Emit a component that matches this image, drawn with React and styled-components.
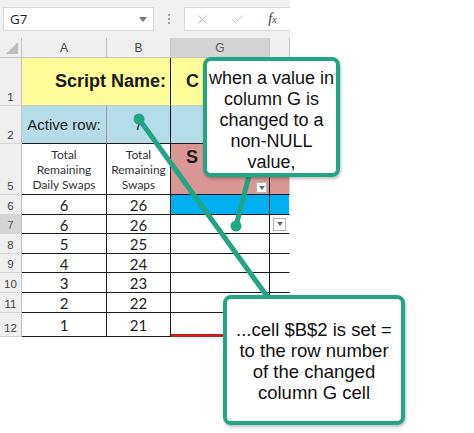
import React from 'react';
import styled, { createGlobalStyle } from 'styled-components';
import { X, Check } from 'lucide-react';

const GlobalStyle = createGlobalStyle`
  html, body { margin: 0; padding: 0; background: #fff; }
  body { width: 474px; height: 433px; overflow: hidden; font-family: "Liberation Sans", Arial, sans-serif; }
`;

const TEAL = '#21a585';
const GRID = '#d4d4d4';
const INK = '#1a1a1a';

const Page = styled.div`
  position: relative;
  width: 474px;
  height: 433px;
  background: #fff;
`;

const Excel = styled.div`
  width: 290px;
  display: flex;
  flex-direction: column;
`;

const Toolbar = styled.div`
  height: 38px;
  background: #f1f1f1;
  display: flex;
  align-items: center;
  padding-left: 3px;
  box-sizing: border-box;
`;

const NameBox = styled.div`
  width: 152px;
  height: 24px;
  background: #fff;
  border: 1px solid #d9d9d9;
  box-sizing: border-box;
  display: flex;
  align-items: center;
  justify-content: space-between;
  padding: 0 6px 0 6px;
  font-family: "Open Sans", sans-serif;
  font-size: 13.5px;
  color: #222;
`;

const Caret = styled.span`
  width: 0;
  height: 0;
  border-left: 4px solid transparent;
  border-right: 4px solid transparent;
  border-top: 5px solid #7a7a7a;
`;

const Sep = styled.div`
  width: 30px;
  display: flex;
  flex-direction: column;
  align-items: center;
  gap: 2px;
`;

const Dot = styled.span`
  width: 2px;
  height: 2px;
  background: #a8a8a8;
`;

const FormulaBox = styled.div`
  flex: 1;
  height: 24px;
  background: #fff;
  border: 1px solid #d9d9d9;
  border-right: none;
  box-sizing: border-box;
  display: grid;
  grid-template-columns: 35px 35px 35px;
  align-items: center;
  justify-items: center;
`;

const Fx = styled.span`
  font-family: "Liberation Serif", serif;
  font-style: italic;
  font-size: 14px;
  color: #333;
  sub { font-size: 10px; vertical-align: baseline; }
`;

const Grid = styled.div`
  display: grid;
  grid-template-columns: 22px 85px 64px 99px 20px;
  grid-template-rows: 20px 48px 38px 51px 20px 19px 20px 19px 20px 20px 24px;
`;

const Head = styled.div`
  box-sizing: border-box;
  background: ${p => (p.$sel ? '#d5d5d5' : '#efefef')};
  border-right: 1px solid #c4c4c4;
  border-bottom: 1px solid #c4c4c4;
  font-family: "Liberation Sans", Arial, sans-serif;
  font-size: 12px;
  color: ${p => (p.$sel ? '#5a5a5a' : '#444')};
  display: flex;
  justify-content: center;
  align-items: center;
`;

const Corner = styled(Head)`
  justify-content: flex-end;
  align-items: flex-end;
  padding: 0 3px 3px 0;
`;

const RowHead = styled(Head)`
  border-bottom-color: #d6d6d6;
  align-items: flex-end;
  padding-bottom: 2px;
  font-size: 11.5px;
`;

const Cell = styled.div`
  box-sizing: border-box;
  position: relative;
  grid-column: span ${p => p.$span || 1};
  background: ${p => p.$bg || '#fff'};
  border-right: 1px solid ${p => p.$r || GRID};
  border-bottom: ${p => p.$b || `1px solid ${GRID}`};
  display: flex;
  align-items: ${p => p.$v || 'center'};
  justify-content: ${p => p.$h || 'center'};
  color: ${INK};
`;

const Title = styled(Cell)`
  font-family: "Liberation Sans", Arial, sans-serif;
  font-weight: bold;
  font-size: 18px;
  padding-right: 4px;
  padding-left: ${p => p.$pl || 0}px;
`;

const Label = styled(Cell)`
  font-family: "Liberation Sans", Arial, sans-serif;
  font-size: 15px;
`;

const HeadText = styled(Cell)`
  font-family: Lato, "Open Sans", sans-serif;
  font-size: 12px;
  line-height: 15px;
  text-align: center;
  color: #333;
  padding-bottom: 2px;
`;

const Num = styled(Cell)`
  font-family: Lato, "Open Sans", sans-serif;
  font-size: 15px;
  color: #222;
  padding-top: 1px;
`;

const SmallBold = styled(Cell)`
  font-family: "Liberation Sans", Arial, sans-serif;
  font-weight: bold;
  font-size: 18px;
  padding: 3px 0 0 15px;
`;

const DropBtn = styled.span`
  box-sizing: border-box;
  width: ${p => p.$s || 11}px;
  height: ${p => p.$s || 11}px;
  background: #fff;
  border: 1px solid #b5b5b5;
  display: flex;
  align-items: center;
  justify-content: center;
  &::after {
    content: '';
    border-left: 3px solid transparent;
    border-right: 3px solid transparent;
    border-top: 4px solid #666;
  }
`;

const CornerDrop = styled(DropBtn)`
  position: absolute;
  right: 2px;
  bottom: 1px;
`;

const Overlay = styled.svg`
  position: absolute;
  left: 0;
  top: 0;
  width: 474px;
  height: 433px;
  pointer-events: none;
`;

const Callout = styled.div`
  position: absolute;
  left: ${p => p.$x}px;
  top: ${p => p.$y}px;
  width: ${p => p.$w}px;
  height: ${p => p.$h}px;
  box-sizing: border-box;
  border: 4px solid ${TEAL};
  border-radius: 8px;
  background: #fff;
  box-shadow: 1px 2px 3px rgba(0, 0, 0, 0.25);
  display: flex;
  align-items: center;
  justify-content: center;
  text-align: center;
  white-space: nowrap;
  padding-top: ${p => p.$pt || 0}px;
  font-family: "Liberation Sans", Arial, sans-serif;
  font-size: ${p => p.$fs || 18}px;
  line-height: 21px;
  color: #111;
`;

const BLACK = '#1a1a1a';
const B1 = `1px solid ${BLACK}`;

const YEL = '#fdfd9a';
const LBLUE = '#b5dde7';
const PINK = '#d99694';
const CYAN = '#00b0f0';

const data = [
  [6, 26],
  [6, 26],
  [5, 25],
  [4, 24],
  [3, 23],
  [2, 22],
  [1, 21],
];

export default function App() {
  return (
    <Page>
      <GlobalStyle />
      <Excel>
        <Toolbar>
          <NameBox>
            <span>G7</span>
            <Caret />
          </NameBox>
          <Sep>
            <Dot />
            <Dot />
            <Dot />
          </Sep>
          <FormulaBox>
            <X size={15} strokeWidth={1.4} color="#b0b0b0" />
            <Check size={15} strokeWidth={1.4} color="#b0b0b0" />
            <Fx>f<sub>x</sub></Fx>
          </FormulaBox>
        </Toolbar>
        <Grid>
          <Corner>
            <svg width="12" height="12" viewBox="0 0 12 12">
              <polygon points="12,0 12,12 0,12" fill="#bdbdbd" />
            </svg>
          </Corner>
          <Head>A</Head>
          <Head>B</Head>
          <Head $sel>G</Head>
          <Head />

          <RowHead>1</RowHead>
          <Title $span={2} $bg={YEL} $r={BLACK} $h="flex-end" $b="1px solid #c9c9c9">Script Name:</Title>
          <Title $bg={YEL} $h="flex-start" $pl={15} $b="1px solid #c9c9c9">C</Title>
          <Cell $bg={YEL} $b="1px solid #c9c9c9" />

          <RowHead>2</RowHead>
          <Label $bg={LBLUE} $r="#9a9a9a" $b={B1}>Active row:</Label>
          <Label $bg={LBLUE} $r={BLACK} $b={B1}>7</Label>
          <Cell $bg={LBLUE} $b={B1} />
          <Cell $bg={LBLUE} $b={B1} />

          <RowHead>5</RowHead>
          <HeadText $r={BLACK} $b={B1} $v="flex-end">Total<br />Remaining<br />Daily Swaps</HeadText>
          <HeadText $r={BLACK} $b={B1} $v="flex-end">Total<br />Remaining<br />Swaps</HeadText>
          <SmallBold $bg={PINK} $r={BLACK} $b={B1} $v="flex-start" $h="flex-start">
            S
            <CornerDrop />
          </SmallBold>
          <Cell $bg={PINK} $b={B1} />

          {data.map(([a, b], i) => {
            const row = i + 6;
            const last = row === 12;
            return (
              <React.Fragment key={row}>
                <RowHead $sel={row === 7}>{row}</RowHead>
                <Num $r={BLACK} $b={B1}>{a}</Num>
                <Num $r={BLACK} $b={B1}>{b}</Num>
                <Cell
                  $bg={row === 6 ? CYAN : '#fff'}
                  $r={BLACK}
                  $b={last ? '3px solid #d01c1c' : B1}
                />
                <Cell $bg={row === 6 ? CYAN : '#fff'} $b={B1} $r="#fff">
                  {row === 7 && <DropBtn $s={13} />}
                </Cell>
              </React.Fragment>
            );
          })}
        </Grid>
      </Excel>

      <Overlay viewBox="0 0 474 433">
        <line x1="250" y1="172" x2="236" y2="226" stroke={TEAL} strokeWidth="5" strokeLinecap="round" />
        <circle cx="236" cy="226" r="5.5" fill={TEAL} />
        <line x1="139" y1="119" x2="269" y2="299" stroke={TEAL} strokeWidth="5" strokeLinecap="round" />
        <circle cx="139" cy="119" r="5.5" fill={TEAL} />
      </Overlay>

      <Callout $x={203} $y={57} $w={137} $h={120} $pt={6}>
        <div>
          when a value in<br />
          column G is<br />
          changed to a<br />
          non-NULL<br />
          value,
        </div>
      </Callout>

      <Callout $x={223} $y={295} $w={182} $h={130} $fs={18.5} $pt={2}>
        <div>
          ...cell $B$2 is set =<br />
          to the row number<br />
          of the changed<br />
          column G cell
        </div>
      </Callout>
    </Page>
  );
}
